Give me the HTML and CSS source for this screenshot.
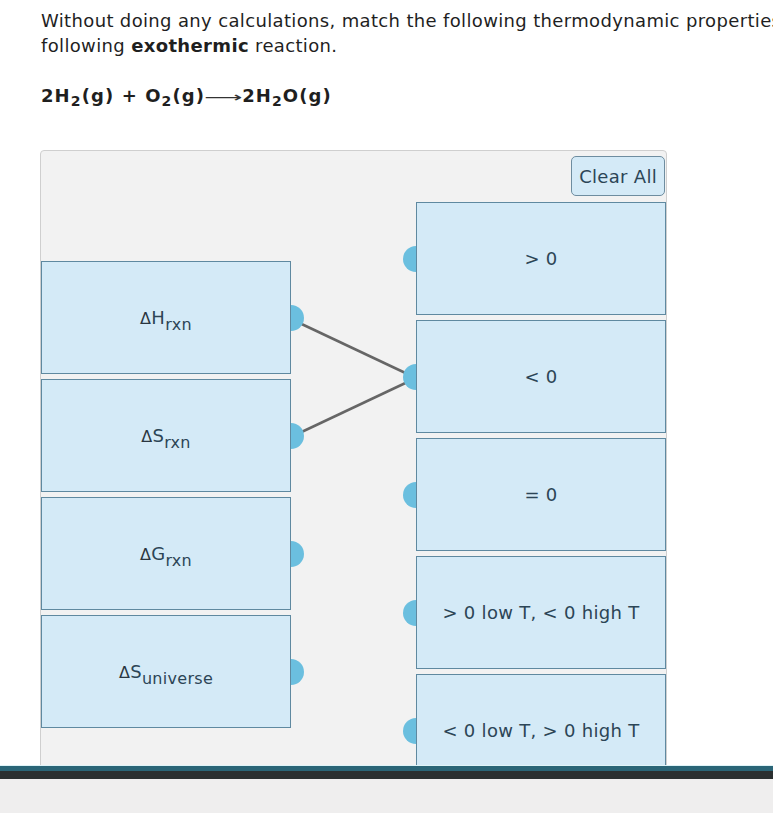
FILE: index.html
```html
<!DOCTYPE html>
<html lang="en">
<head>
<meta charset="utf-8">
<title>Thermodynamic properties matching</title>
<link rel="stylesheet" href="styles.css">
</head>
<body>
<main class="question">
  <p class="prompt">Without doing any calculations, match the following thermodynamic properties to their signs for the following <b>exothermic</b> reaction.</p>
  <p class="equation">2H<sub>2</sub>(g) + O<sub>2</sub>(g)<span class="arrow">⟶</span>2H<sub>2</sub>O(g)</p>

  <section class="match-panel">
    <svg class="links" width="626" height="640" viewBox="0 0 626 640" aria-hidden="true">
      <line x1="250" y1="168" x2="375" y2="227"/>
      <line x1="250" y1="286" x2="375" y2="227"/>
    </svg>
    <div class="column left">
      <div class="item"><span class="label"><span class="delta">Δ</span>H<sub>rxn</sub></span></div>
      <div class="item"><span class="label"><span class="delta">Δ</span>S<sub>rxn</sub></span></div>
      <div class="item"><span class="label"><span class="delta">Δ</span>G<sub>rxn</sub></span></div>
      <div class="item"><span class="label"><span class="delta">Δ</span>S<sub>universe</sub></span></div>
    </div>
    <div class="column right">
      <button class="clear" type="button">Clear All</button>
      <div class="item"><span class="label">&gt; 0</span></div>
      <div class="item"><span class="label">&lt; 0</span></div>
      <div class="item"><span class="label">= 0</span></div>
      <div class="item"><span class="label">&gt; 0 low T, &lt; 0 high T</span></div>
      <div class="item"><span class="label">&lt; 0 low T, &gt; 0 high T</span></div>
    </div>
  </section>
</main>
<footer class="toolbar"></footer>
</body>
</html>
```

FILE: styles.css
```css
html, body {
  margin: 0;
  padding: 0;
  background: #ffffff;
  overflow: hidden;
}

body {
  font-family: "DejaVu Sans", Verdana, sans-serif;
  color: #1f1f1f;
}

.question {
  padding: 8px 0 0 40px;
  width: 1200px;
}

.prompt {
  margin: 0 0 0 1px;
  width: 1000px;
  font-size: 18px;
  letter-spacing: 0.35px;
  line-height: 25px;
}

.equation {
  margin: 25px 0 0 1px;
  font-size: 18px;
  font-weight: bold;
  letter-spacing: 1.1px;
  line-height: 25px;
}

.equation sub {
  font-size: 14px;
  vertical-align: -4px;
  line-height: 0;
}

.arrow {
  font-weight: normal;
  display: inline-block;
  transform: scaleX(1.9);
  margin: 0 9px 0 8px;
  font-size: 14px;
  letter-spacing: 0;
  color: #333;
}

.match-panel {
  position: relative;
  isolation: isolate;
  margin-top: 40px;
  width: 625px;
  height: 700px;
  display: flex;
  gap: 125px;
  background: #f2f2f2;
  border: 1px solid #cfcfcf;
  border-radius: 4px;
}

.links {
  position: absolute;
  left: 0;
  top: 0;
  z-index: -1;
}

.links line {
  stroke: #666666;
  stroke-width: 2.5;
}

.column {
  width: 250px;
  display: flex;
  flex-direction: column;
  gap: 5px;
}

.column.left {
  margin-top: 110px;
}

.item {
  position: relative;
  box-sizing: border-box;
  height: 113px;
  display: flex;
  align-items: center;
  justify-content: center;
  background: #d4eaf7;
  border: 1px solid #5f89a0;
  color: #2c4556;
  font-size: 18px;
  letter-spacing: 0.3px;
}

.label {
  white-space: nowrap;
}

.delta {
  font-size: 16px;
  color: #2a3640;
}

.label sub {
  font-size: 16px;
  vertical-align: -6px;
  line-height: 0;
}

/* connector knobs peek out from behind each card */
.item::before {
  content: "";
  position: absolute;
  top: 50%;
  width: 26px;
  height: 26px;
  margin-top: -13px;
  border-radius: 50%;
  background: #6bbfdf;
  z-index: -1;
}

.left .item::before {
  right: -14px;
}

.right .item::before {
  left: -14px;
}

.clear {
  align-self: flex-end;
  margin: 5px 1px 1px 0;
  height: 40px;
  padding: 0 7px;
  font-family: "DejaVu Sans", Verdana, sans-serif;
  font-size: 18px;
  letter-spacing: 0.3px;
  color: #2c4556;
  background: #d4eaf7;
  border: 1px solid #6e8da0;
  border-radius: 5px;
}

.toolbar {
  position: fixed;
  left: 0;
  right: 0;
  bottom: 0;
  height: 47px;
  background: #efeeee;
  border-top: 1px solid #dff4f8;
  box-shadow: inset 0 5px 0 #2a6577, inset 0 13px 0 #2b2f30;
}
```
